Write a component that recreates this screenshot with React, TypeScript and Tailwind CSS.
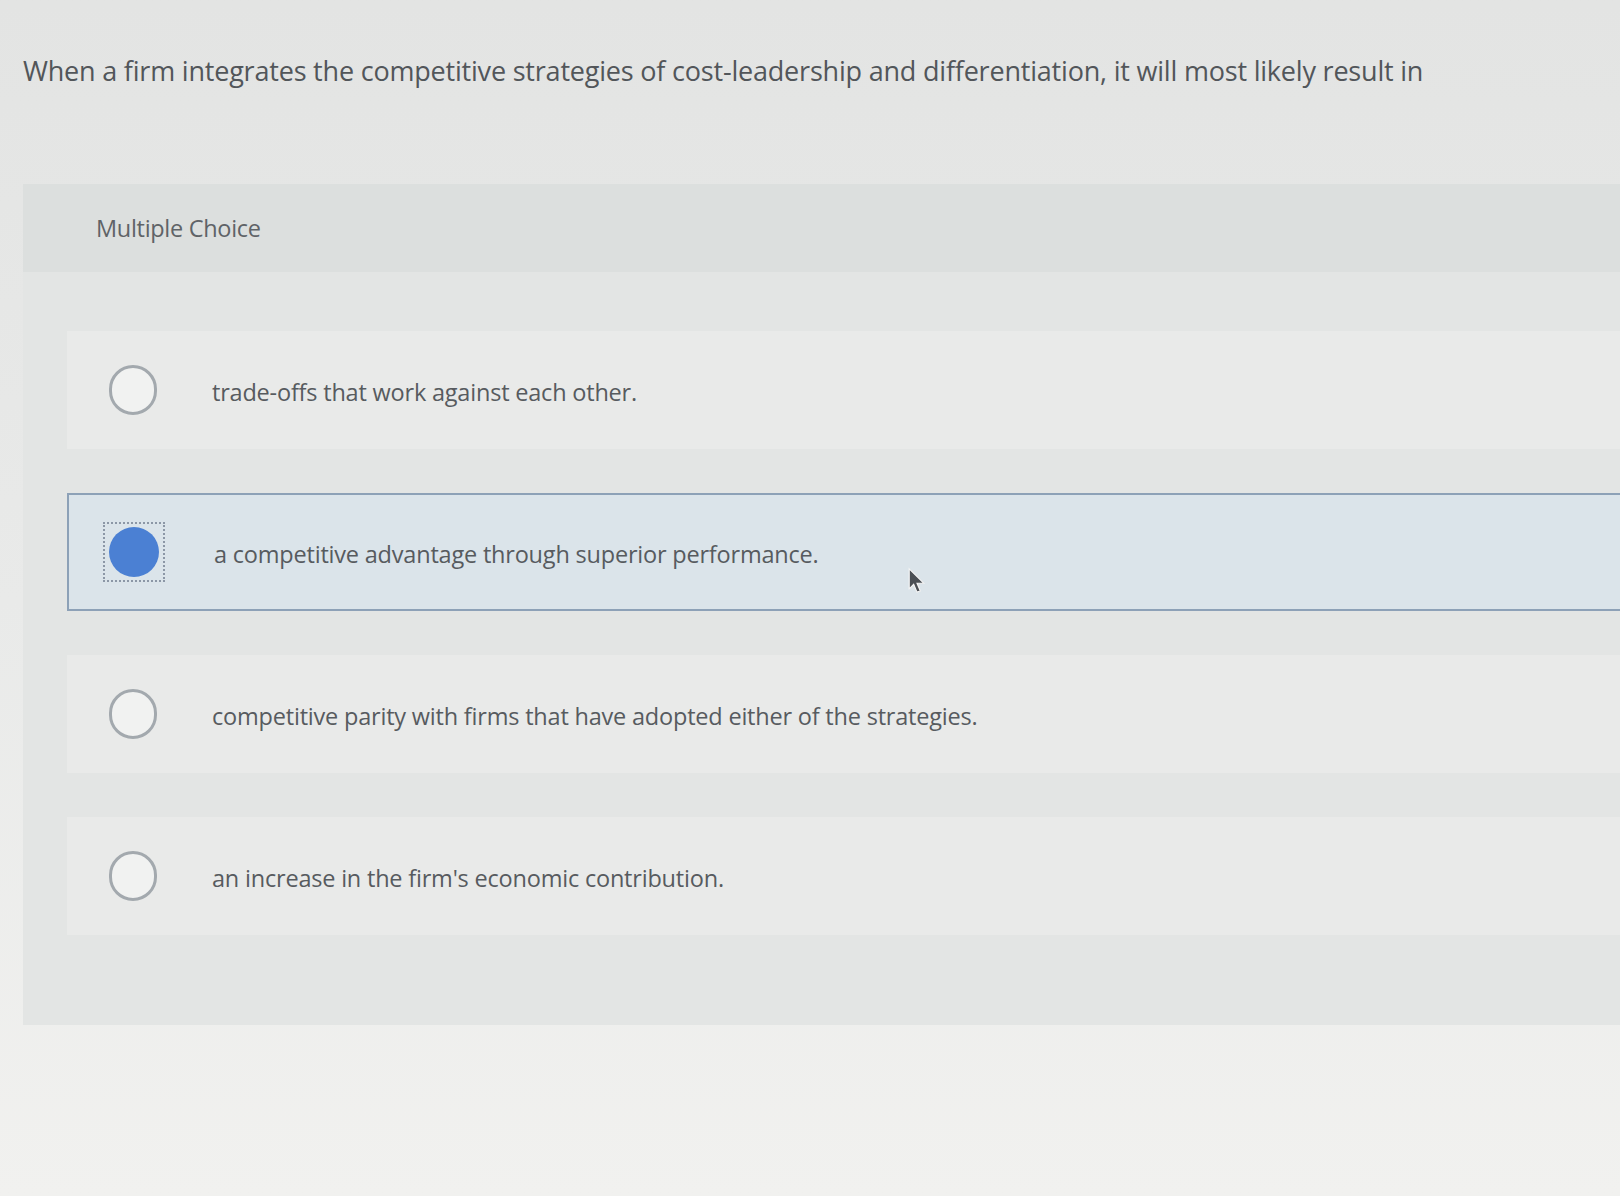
import { useState } from 'react';

const options = [
  'trade-offs that work against each other.',
  'a competitive advantage through superior performance.',
  'competitive parity with firms that have adopted either of the strategies.',
  "an increase in the firm's economic contribution.",
];

function Radio({ checked }: { checked: boolean }) {
  if (checked) {
    return (
      <div className="flex h-[60px] w-[62px] items-center justify-center border-2 border-dotted border-[#8c97a6]">
        <div className="h-[50px] w-[50px] rounded-full bg-[#4b80d3]" />
      </div>
    );
  }
  return <div className="h-[50px] w-[48px] rounded-full border-[3px] border-[#a3a9ae] bg-[#f1f2f1]" />;
}

export default function App() {
  const [selected, setSelected] = useState(1);

  return (
    <div
      className="min-h-[1196px] w-[1620px] overflow-hidden bg-linear-to-b from-[#e3e4e3] via-[#e9eae9] to-[#f1f1ef] pt-[53px]"
      style={{ fontFamily: '"Open Sans", Lato, sans-serif' }}
    >
      <h1 className="pl-[23px] text-[27px] leading-[36px] tracking-[-0.2px] text-[#52565a]">
        When a firm integrates the competitive strategies of cost-leadership and differentiation, it will most likely result in
      </h1>

      <div className="ml-[23px] mt-[95px] bg-[#e3e5e4] pb-[90px]">
        <div className="flex h-[88px] items-center bg-[#dcdfde] pl-[73px] pt-[2px] text-[23.5px] tracking-[-0.3px] text-[#5f6367]">
          Multiple Choice
        </div>

        <div className="mt-[59px] flex flex-col gap-[44px] pl-[44px]">
          {options.map((text, i) => {
            const isSel = i === selected;
            return (
              <button
                key={i}
                onClick={() => setSelected(i)}
                className={
                  isSel
                    ? 'relative flex h-[118px] items-center border-2 border-r-0 border-[#8da1b7] bg-[#dbe4ea] text-left'
                    : 'relative flex h-[118px] items-center bg-[#e9eae9] text-left'
                }
              >
                <div className={isSel ? 'ml-[34px] flex w-[111px]' : 'ml-[42px] flex w-[103px]'}>
                  <Radio checked={isSel} />
                </div>
                <span className="pt-[5px] text-[23.5px] tracking-[-0.2px] text-[#575b5f]">{text}</span>
                {isSel && (
                  <svg
                    className="absolute left-[838px] top-[72px]"
                    width="20"
                    height="28"
                    viewBox="0 0 18 24"
                  >
                    <path d="M2 1 L2 19 L6 15 L9 22 L12 21 L9 14 L15 14 Z" fill="#4a4f55" stroke="#f5f5f5" strokeWidth="1" />
                  </svg>
                )}
              </button>
            );
          })}
        </div>
      </div>
    </div>
  );
}
